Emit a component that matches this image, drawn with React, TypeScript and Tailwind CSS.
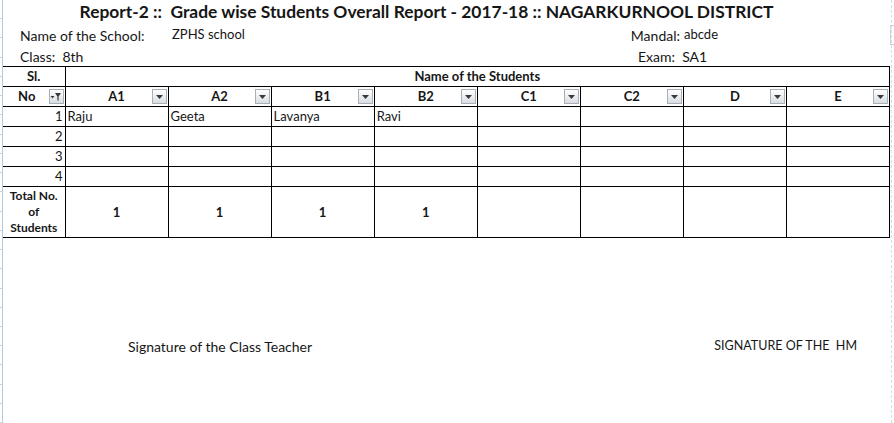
import React from "react";

const cols = ["A1", "A2", "B1", "B2", "C1", "C2", "D", "E"];
const rows = [
  ["Raju", "Geeta", "Lavanya", "Ravi", "", "", "", ""],
  ["", "", "", "", "", "", "", ""],
  ["", "", "", "", "", "", "", ""],
  ["", "", "", "", "", "", "", ""],
];
const totals = ["1", "1", "1", "1", "", "", "", ""];

const DropBtn = () => (
  <span className="absolute right-[1px] top-[2px] flex h-[15px] w-[15px] items-center justify-center border border-[#a9b0b8] bg-gradient-to-b from-white to-[#d9dde2]">
    <svg width="7" height="4" viewBox="0 0 7 4">
      <path d="M0 0h7L3.5 4z" fill="#3a3a3a" />
    </svg>
  </span>
);

const FilterBtn = () => (
  <span className="absolute right-[1px] top-[2px] flex h-[15px] w-[15px] items-center justify-center border border-[#a9b0b8] bg-gradient-to-b from-white to-[#d9dde2]">
    <svg width="12" height="10" viewBox="0 0 12 10">
      <path d="M5 1h6L8.6 4.5V9L7.4 8V4.5z" fill="#3a3a3a" />
      <path d="M0.5 4h4L2.5 6.5z" fill="#3a3a3a" />
    </svg>
  </span>
);

export default function App() {
  return (
    <div className="relative flex h-[423px] w-[894px] overflow-hidden bg-white font-['Lato',sans-serif] text-[#161616]">
      {/* row header edge */}
      <div className="flex w-[3px] flex-col border-r border-[#b7c8db]">
        {Array.from({ length: 22 }).map((_, i) => (
          <div key={i} className="h-[20px] border-b border-[#c9d6e4]" />
        ))}
      </div>

      <div className="flex flex-1 flex-col">
        <div className="flex h-[24px] items-center justify-center pr-[44px] text-[17.4px] font-bold">
          Report-2 ::&nbsp; Grade wise Students Overall Report - 2017-18 :: NAGARKURNOOL DISTRICT
        </div>
        <div className="flex h-[22px] items-center text-[14px]">
          <span className="ml-[17px] w-[152px]">Name of the School:</span>
          <span className="text-[13px]">ZPHS school</span>
          <span className="ml-auto w-[55px] text-right">Mandal:</span>
          <span className="ml-[4px] w-[210px] text-[13px]">abcde</span>
        </div>
        <div className="flex h-[20px] items-center text-[14px]">
          <span className="ml-[17px]">Class:&nbsp; 8th</span>
          <span className="ml-auto w-[256px]">Exam:&nbsp; SA1</span>
        </div>

        <table className="w-[887px] table-fixed border-collapse text-[13px] leading-[15px]">
          <colgroup>
            <col className="w-[62px]" />
            {cols.map((c) => (
              <col key={c} className="w-[103px]" />
            ))}
          </colgroup>
          <tbody>
            <tr className="h-[20px] font-bold">
              <td className="border border-l-0 border-black p-0 text-center">Sl.</td>
              <td colSpan={8} className="border border-black p-0 text-center">
                Name of the Students
              </td>
            </tr>
            <tr className="h-[20px] font-bold">
              <td className="relative border border-l-0 border-black p-0 pr-[14px] text-center">
                No
                <FilterBtn />
              </td>
              {cols.map((c) => (
                <td key={c} className="relative border border-black p-0 text-center">
                  {c}
                  <DropBtn />
                </td>
              ))}
            </tr>
            {rows.map((r, i) => (
              <tr key={i} className="h-[20px]">
                <td className="border border-l-0 border-black p-0 pr-[2px] text-right">{i + 1}</td>
                {r.map((n, j) => (
                  <td key={j} className="border border-black p-0 pl-[2px]">
                    {n}
                  </td>
                ))}
              </tr>
            ))}
            <tr className="h-[51px] font-bold">
              <td className="border border-l-0 border-black p-0 text-center text-[12px] leading-[16px]">
                Total No.
                <br />
                of
                <br />
                Students
              </td>
              {totals.map((t, j) => (
                <td key={j} className="border border-black p-0 text-center">
                  {t}
                </td>
              ))}
            </tr>
          </tbody>
        </table>

        <div className="mt-[98px] flex items-center">
          <span className="ml-[125px] text-[14px]">Signature of the Class Teacher</span>
          <span className="ml-auto mr-[37px] text-[12.5px]">SIGNATURE OF THE&nbsp; HM</span>
        </div>
      </div>

      {/* next column edge */}
      <div className="absolute right-0 top-0 h-full w-[3px] border-l border-dashed border-[#d8dde3]" />
      <div className="absolute right-0 top-[25px] h-[20px] w-[4px] border border-r-0 border-[#cfd3d8]" />
    </div>
  );
}
